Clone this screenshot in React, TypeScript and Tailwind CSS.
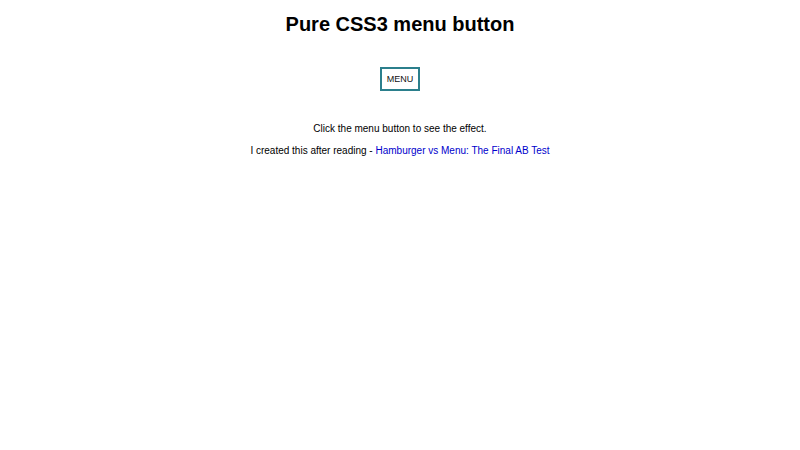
export default function App() {
  return (
    <div className="min-h-[450px] bg-white font-['Liberation_Sans',Arial,sans-serif] text-black text-center">
      <h1 className="pt-3 text-[20px] leading-6 font-bold">Pure CSS3 menu button</h1>

      <div className="mt-[31px] flex justify-center">
        <button className="w-10 h-6 border-2 border-[#2b7f8c] text-[9px] leading-none text-[#111]">
          MENU
        </button>
      </div>

      <p className="mt-[32px] text-[10px] leading-3">Click the menu button to see the effect.</p>
      <p className="mt-[10px] text-[10px] leading-3">
        I created this after reading -{" "}
        <a href="#" className="text-[#0000cc]">
          Hamburger vs Menu: The Final AB Test
        </a>
      </p>
    </div>
  );
}
